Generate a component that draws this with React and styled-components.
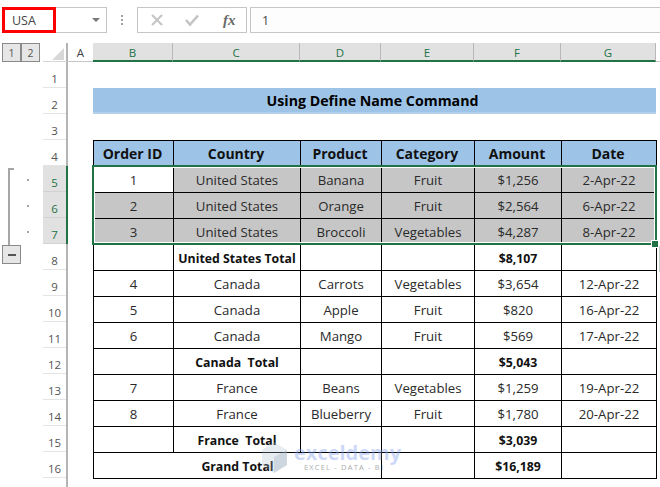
import styled, { createGlobalStyle } from 'styled-components'

const GlobalStyle = createGlobalStyle`
  html, body {
    margin: 0;
    padding: 0;
    background: #fff;
  }
  * {
    box-sizing: border-box;
  }
`

const COLUMNS = [
  { name: 'B', width: 80 },
  { name: 'C', width: 127 },
  { name: 'D', width: 81 },
  { name: 'E', width: 93 },
  { name: 'F', width: 87 },
  { name: 'G', width: 95 }
]

const ORDERS = [
  { id: '1', country: 'United States', product: 'Banana', category: 'Fruit', amount: '$1,256', date: '2-Apr-22', picked: true },
  { id: '2', country: 'United States', product: 'Orange', category: 'Fruit', amount: '$2,564', date: '6-Apr-22', picked: true },
  { id: '3', country: 'United States', product: 'Broccoli', category: 'Vegetables', amount: '$4,287', date: '8-Apr-22', picked: true },
  { total: 'United States Total', amount: '$8,107' },
  { id: '4', country: 'Canada', product: 'Carrots', category: 'Vegetables', amount: '$3,654', date: '12-Apr-22' },
  { id: '5', country: 'Canada', product: 'Apple', category: 'Fruit', amount: '$820', date: '16-Apr-22' },
  { id: '6', country: 'Canada', product: 'Mango', category: 'Fruit', amount: '$569', date: '17-Apr-22' },
  { total: 'Canada  Total', amount: '$5,043' },
  { id: '7', country: 'France', product: 'Beans', category: 'Vegetables', amount: '$1,259', date: '19-Apr-22' },
  { id: '8', country: 'France', product: 'Blueberry', category: 'Fruit', amount: '$1,780', date: '20-Apr-22' },
  { total: 'France  Total', amount: '$3,039' }
]

const ROW_NUMBERS = Array.from({ length: 16 }, (_, i) => i + 1)

const Page = styled.div`
  position: relative;
  width: 660px;
  height: 487px;
  overflow: hidden;
  background: #fff;
  font-family: "Open Sans", "Noto Sans", sans-serif;
  color: #222;
`

const FormulaBar = styled.div`
  display: flex;
  align-items: stretch;
  height: 26px;
  margin-top: 7px;
`

const NameBox = styled.div`
  position: relative;
  display: flex;
  align-items: center;
  justify-content: space-between;
  width: 104px;
  margin-left: 3px;
  padding: 0 6px 0 8px;
  border: 1px solid #c6c6c6;
  font-size: 12.5px;
  color: #444;
`

const RedMark = styled.span`
  position: absolute;
  left: -2px;
  top: -1px;
  width: 54px;
  height: 26px;
  border: 3px solid #f00;
`

const Caret = styled.span`
  width: 0;
  height: 0;
  border-left: 4px solid transparent;
  border-right: 4px solid transparent;
  border-top: 4px solid #777;
`

const Grip = styled.div`
  display: flex;
  flex-direction: column;
  justify-content: center;
  gap: 2px;
  width: 30px;
  align-items: center;
`

const GripDot = styled.span`
  width: 2px;
  height: 2px;
  background: #a0a0a0;
`

const FormulaButtons = styled.div`
  display: flex;
  align-items: center;
  width: 110px;
  border: 1px solid #c6c6c6;
  padding-left: 12px;
  gap: 20px;
`

const Fx = styled.span`
  margin-left: 3px;
  font-family: "Liberation Serif", serif;
  font-style: italic;
  font-weight: 700;
  font-size: 15px;
  color: #6a6a6a;
`

const FormulaInput = styled.div`
  display: flex;
  align-items: center;
  flex: 1;
  margin-left: 3px;
  padding-left: 11px;
  border: 1px solid #c6c6c6;
  border-right: 0;
  background: #fdfdfd;
  font-size: 12.5px;
  color: #444;
`

const HeaderRow = styled.div`
  display: flex;
  height: 19px;
  margin-top: 10px;
`

const LevelButtons = styled.div`
  display: flex;
  width: 43px;
  padding: 0 3px 3px 2px;
`

const LevelButton = styled.span`
  display: flex;
  align-items: center;
  justify-content: center;
  width: 19px;
  height: 19px;
  border: 1px solid #8a8a8a;
  background: #e6e6e6;
  font-size: 10.5px;
  color: #555;
`

const Corner = styled.div`
  width: 25px;
  padding: 5px 0 0 9px;
  border-right: 2px solid #b4b4b4;
  border-bottom: 1px solid #d6d6d6;
`

const ColumnA = styled.div`
  display: flex;
  align-items: center;
  justify-content: center;
  width: 25px;
  border-bottom: 1px solid #c6c6c6;
  font-size: 11.5px;
  color: #444;
`

const ColumnHead = styled.div`
  display: flex;
  align-items: center;
  justify-content: center;
  width: ${props => props.$width}px;
  padding-top: 2px;
  border-right: 1px solid #b8b8b8;
  border-bottom: 2px solid #217346;
  background: #e1e1e1;
  font-size: 11.5px;
  color: #217346;
`

const HeaderTail = styled.div`
  flex: 1;
  border-bottom: 1px solid #c6c6c6;
`

const SheetBody = styled.div`
  display: flex;
  height: 425px;
`

const OutlineGutter = styled.div`
  display: grid;
  grid-template-rows: repeat(16, 26px);
  width: 43px;
`

const OutlineBracket = styled.div`
  grid-row: 5 / span 3;
  grid-column: 1;
  width: 6px;
  height: 80px;
  margin: 2px 0 0 8px;
  border-left: 2px solid #a6a6a6;
  border-top: 2px solid #a6a6a6;
`

const OutlineDot = styled.span`
  grid-row: ${props => props.$row};
  grid-column: 1;
  width: 2px;
  height: 2px;
  margin: 13px 0 0 27px;
  background: #a6a6a6;
`

const CollapseButton = styled.span`
  grid-row: 8;
  grid-column: 1;
  display: flex;
  align-items: center;
  justify-content: center;
  width: 19px;
  height: 19px;
  margin: 1px 0 0 2px;
  border: 1px solid #8a8a8a;
  background: #e6e6e6;
`

const MinusBar = styled.span`
  width: 8px;
  height: 2px;
  background: #555;
`

const RowHeads = styled.div`
  width: 25px;
  border-right: 2px solid #b4b4b4;
`

const RowHead = styled.div`
  display: flex;
  align-items: flex-end;
  justify-content: center;
  height: 26px;
  padding-bottom: 1px;
  border-bottom: 1px solid ${props => props.$active ? '#d2d2d2' : '#e4e4e4'};
  background: ${props => props.$active ? '#e1e1e1' : '#fff'};
  box-shadow: ${props => props.$active ? '2px 0 0 #217346' : 'none'};
  font-size: 11.5px;
  line-height: 15px;
  color: ${props => props.$active ? '#217346' : '#555'};
`

const Cells = styled.div`
  position: relative;
  flex: 1;
  padding: 26px 0 0 25px;
`

const TitleBar = styled.div`
  display: flex;
  align-items: center;
  justify-content: center;
  width: 563px;
  height: 26px;
  padding: 1px 4px 0 0;
  border-bottom: 2px solid #b3d0ec;
  background: #9dc3e6;
  font-size: 14.2px;
  font-weight: 700;
  color: #000;
`

const DataTable = styled.table`
  width: 563px;
  margin-top: 26px;
  table-layout: fixed;
  border-collapse: collapse;
  font-size: 13.2px;
`

const HeadCell = styled.th`
  height: 26px;
  padding: 0 2px 0 0;
  border: 1px solid #000;
  background: #9dc3e6;
  font-size: 14px;
  font-weight: 700;
  color: #111;
`

const Cell = styled.td`
  height: 26px;
  padding: 1px 0 0;
  border: 1px solid #000;
  background: ${props => props.$picked ? '#c6c6c6' : '#fff'};
  text-align: center;
  white-space: pre;
  font-size: ${props => props.$bold ? 12.3 : 13.2}px;
  font-weight: ${props => props.$bold ? 700 : 400};
  color: ${props => props.$bold ? '#111' : '#2a2a2a'};
`

const Selection = styled.div`
  position: absolute;
  left: 24px;
  top: 103px;
  width: 565px;
  height: 80px;
  border: 2px solid #217346;
  box-shadow: inset 0 0 0 1px #fff;
  pointer-events: none;
`

const FillHandle = styled.span`
  position: absolute;
  right: -3px;
  bottom: -4px;
  width: 6px;
  height: 6px;
  background: #217346;
  outline: 1px solid #fff;
`

const EdgeMark = styled.span`
  position: absolute;
  right: 0;
  top: 184px;
  width: 1px;
  height: 26px;
  background: #c3d4ca;
`

const Watermark = styled.div`
  position: absolute;
  left: 262px;
  top: 442px;
  display: flex;
  align-items: flex-start;
  gap: 7px;
  pointer-events: none;
`

const WatermarkText = styled.div`
  display: flex;
  flex-direction: column;
  align-items: center;
  padding-top: 1px;
`

const WatermarkName = styled.span`
  font-family: "Open Sans", sans-serif;
  font-size: 20px;
  font-weight: 700;
  line-height: 20px;
  color: rgba(130, 160, 235, 0.42);
`

const WatermarkTag = styled.span`
  padding-right: 7px;
  font-family: "Open Sans", sans-serif;
  font-size: 7.5px;
  line-height: 9px;
  letter-spacing: 1.2px;
  color: rgba(110, 110, 110, 0.6);
`

const CrossIcon = () => (
  <svg width="14" height="14" viewBox="0 0 14 14">
    <path d="M2 2 L12 12 M12 2 L2 12" stroke="#c4c4c4" strokeWidth="2" fill="none" />
  </svg>
)

const CheckIcon = () => (
  <svg width="16" height="14" viewBox="0 0 16 14">
    <path d="M2 7 L6 11.5 L14 2.5" stroke="#c4c4c4" strokeWidth="2.6" fill="none" />
  </svg>
)

const CornerMark = () => (
  <svg width="12" height="12" viewBox="0 0 12 12" style={{ display: 'block' }}>
    <path d="M12 0 V12 H0 Z" fill="#d8d8d8" />
  </svg>
)

const LogoMark = () => (
  <svg width="25" height="31" viewBox="0 0 25 31">
    <path d="M12 0 L25 8 V23 L12 31 L0 23 V8 Z" fill="rgba(170, 185, 205, 0.28)" />
    <path d="M12 15 L25 8 V23 L12 31 Z" fill="rgba(150, 165, 185, 0.3)" />
  </svg>
)

const OrderRow = ({ order, rowIndex }) => {
  if (order.total) {
    return (
      <tr>
        <Cell />
        <Cell $bold>{order.total}</Cell>
        <Cell />
        <Cell />
        <Cell $bold>{order.amount}</Cell>
        <Cell />
      </tr>
    )
  }
  return (
    <tr>
      <Cell $picked={order.picked && rowIndex > 0}>{order.id}</Cell>
      <Cell $picked={order.picked}>{order.country}</Cell>
      <Cell $picked={order.picked}>{order.product}</Cell>
      <Cell $picked={order.picked}>{order.category}</Cell>
      <Cell $picked={order.picked}>{order.amount}</Cell>
      <Cell $picked={order.picked}>{order.date}</Cell>
    </tr>
  )
}

const App = () => {
  return (
    <Page>
      <GlobalStyle />

      <FormulaBar>
        <NameBox>
          USA
          <Caret />
          <RedMark />
        </NameBox>
        <Grip>
          <GripDot />
          <GripDot />
          <GripDot />
        </Grip>
        <FormulaButtons>
          <CrossIcon />
          <CheckIcon />
          <Fx>fx</Fx>
        </FormulaButtons>
        <FormulaInput>1</FormulaInput>
      </FormulaBar>

      <HeaderRow>
        <LevelButtons>
          <LevelButton>1</LevelButton>
          <LevelButton>2</LevelButton>
        </LevelButtons>
        <Corner><CornerMark /></Corner>
        <ColumnA>A</ColumnA>
        {COLUMNS.map(col => (
          <ColumnHead key={col.name} $width={col.width}>{col.name}</ColumnHead>
        ))}
        <HeaderTail />
      </HeaderRow>

      <SheetBody>
        <OutlineGutter>
          <OutlineBracket />
          <OutlineDot $row={5} />
          <OutlineDot $row={6} />
          <OutlineDot $row={7} />
          <CollapseButton><MinusBar /></CollapseButton>
        </OutlineGutter>

        <RowHeads>
          {ROW_NUMBERS.map(n => (
            <RowHead key={n} $active={n >= 5 && n <= 7}>{n}</RowHead>
          ))}
        </RowHeads>

        <Cells>
          <TitleBar>Using Define Name Command</TitleBar>
          <DataTable>
            <colgroup>
              {COLUMNS.map(col => <col key={col.name} style={{ width: col.width }} />)}
            </colgroup>
            <thead>
              <tr>
                <HeadCell>Order ID</HeadCell>
                <HeadCell>Country</HeadCell>
                <HeadCell>Product</HeadCell>
                <HeadCell>Category</HeadCell>
                <HeadCell>Amount</HeadCell>
                <HeadCell>Date</HeadCell>
              </tr>
            </thead>
            <tbody>
              {ORDERS.map((order, i) => <OrderRow key={i} order={order} rowIndex={i} />)}
              <tr>
                <Cell colSpan={3} $bold>Grand Total</Cell>
                <Cell />
                <Cell $bold>$16,189</Cell>
                <Cell />
              </tr>
            </tbody>
          </DataTable>
          <Selection>
            <FillHandle />
          </Selection>
          <EdgeMark />
        </Cells>
      </SheetBody>

      <Watermark>
        <LogoMark />
        <WatermarkText>
          <WatermarkName>exceldemy</WatermarkName>
          <WatermarkTag>EXCEL - DATA - BI</WatermarkTag>
        </WatermarkText>
      </Watermark>
    </Page>
  )
}

export default App
